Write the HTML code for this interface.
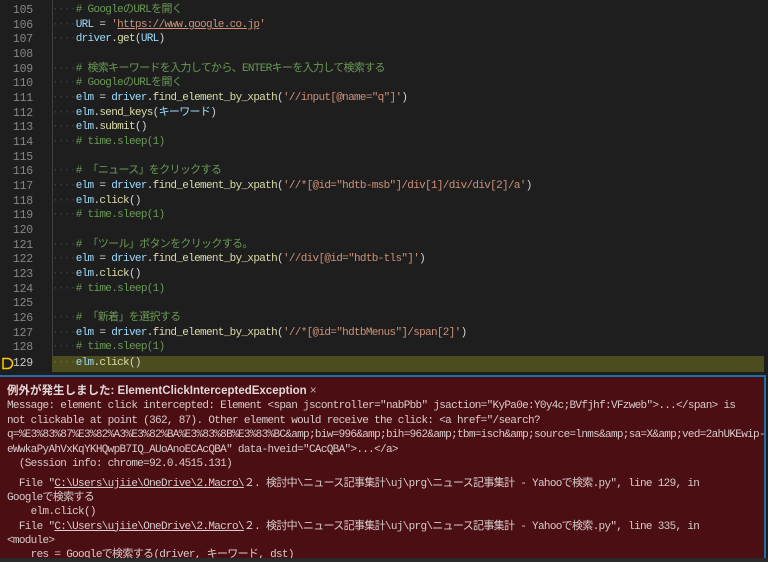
<!DOCTYPE html>
<html><head><meta charset="utf-8"><style>
*{margin:0;padding:0;box-sizing:border-box}
body{width:768px;height:562px;background:#1e1e1e;overflow:hidden;position:relative;font-family:"Liberation Mono","Noto Sans CJK JP",monospace}
.ln{position:absolute;left:0;width:33px;text-align:right;color:#858585;font-size:11.5px;letter-spacing:-0.2px}
.cl{position:absolute;left:52px;font-size:11px;letter-spacing:-0.68px;white-space:pre;color:#d4d4d4}
.d{color:#3e3e3e}
.c{color:#6a9955}.v{color:#9cdcfe}.s{color:#ce9178}.f{color:#dcdcaa}.u{text-decoration:underline}
.guide{position:absolute;left:52px;top:0;width:1px;height:372px;background:#404040}
.hl{position:absolute;left:52px;top:356px;width:712px;height:16px;background:#4b4d1e}
.panel{position:absolute;left:0;top:375px;width:766px;height:183px;background:#4b0e12;border-top:2px solid #1f6fa8;border-right:2px solid #1f6fa8}
.title{position:absolute;left:7px;top:5px;font-family:"Liberation Sans","Noto Sans CJK JP",sans-serif;font-weight:bold;font-size:11.5px;color:#e0d8d8}
.pl{position:absolute;left:7px;font-size:11px;letter-spacing:-0.68px;white-space:pre;color:#d8cccc}
.bottom{position:absolute;left:0;top:558px;width:768px;height:4px;background:#2a2a2a}
</style></head><body>
<div class="guide"></div>
<div class="hl"></div>
<div class="ln" style="top:3px;line-height:15px">105</div>
<div class="cl" style="top:3px;line-height:15px"><span class="d">····</span><span class="c"># GoogleのURLを開く</span></div>
<div class="ln" style="top:18px;line-height:15px">106</div>
<div class="cl" style="top:18px;line-height:15px"><span class="d">····</span><span class="v">URL</span> = <span class="s">'<span class="u">https://www.google.co.jp</span>'</span></div>
<div class="ln" style="top:32px;line-height:15px">107</div>
<div class="cl" style="top:32px;line-height:15px"><span class="d">····</span><span class="v">driver</span>.<span class="f">get</span>(<span class="v">URL</span>)</div>
<div class="ln" style="top:47px;line-height:15px">108</div>
<div class="ln" style="top:62px;line-height:15px">109</div>
<div class="cl" style="top:62px;line-height:15px"><span class="d">····</span><span class="c"># 検索キーワードを入力してから、ENTERキーを入力して検索する</span></div>
<div class="ln" style="top:76px;line-height:15px">110</div>
<div class="cl" style="top:76px;line-height:15px"><span class="d">····</span><span class="c"># GoogleのURLを開く</span></div>
<div class="ln" style="top:91px;line-height:15px">111</div>
<div class="cl" style="top:91px;line-height:15px"><span class="d">····</span><span class="v">elm</span> = <span class="v">driver</span>.<span class="f">find_element_by_xpath</span>(<span class="s">'//input[@name="q"]'</span>)</div>
<div class="ln" style="top:106px;line-height:15px">112</div>
<div class="cl" style="top:106px;line-height:15px"><span class="d">····</span><span class="v">elm</span>.<span class="f">send_keys</span>(<span class="v">キーワード</span>)</div>
<div class="ln" style="top:120px;line-height:15px">113</div>
<div class="cl" style="top:120px;line-height:15px"><span class="d">····</span><span class="v">elm</span>.<span class="f">submit</span>()</div>
<div class="ln" style="top:135px;line-height:15px">114</div>
<div class="cl" style="top:135px;line-height:15px"><span class="d">····</span><span class="c"># time.sleep(1)</span></div>
<div class="ln" style="top:150px;line-height:15px">115</div>
<div class="ln" style="top:164px;line-height:15px">116</div>
<div class="cl" style="top:164px;line-height:15px"><span class="d">····</span><span class="c"># 「ニュース」をクリックする</span></div>
<div class="ln" style="top:179px;line-height:15px">117</div>
<div class="cl" style="top:179px;line-height:15px"><span class="d">····</span><span class="v">elm</span> = <span class="v">driver</span>.<span class="f">find_element_by_xpath</span>(<span class="s">'//*[@id="hdtb-msb"]/div[1]/div/div[2]/a'</span>)</div>
<div class="ln" style="top:194px;line-height:15px">118</div>
<div class="cl" style="top:194px;line-height:15px"><span class="d">····</span><span class="v">elm</span>.<span class="f">click</span>()</div>
<div class="ln" style="top:208px;line-height:15px">119</div>
<div class="cl" style="top:208px;line-height:15px"><span class="d">····</span><span class="c"># time.sleep(1)</span></div>
<div class="ln" style="top:223px;line-height:15px">120</div>
<div class="ln" style="top:238px;line-height:15px">121</div>
<div class="cl" style="top:238px;line-height:15px"><span class="d">····</span><span class="c"># 「ツール」ボタンをクリックする。</span></div>
<div class="ln" style="top:252px;line-height:15px">122</div>
<div class="cl" style="top:252px;line-height:15px"><span class="d">····</span><span class="v">elm</span> = <span class="v">driver</span>.<span class="f">find_element_by_xpath</span>(<span class="s">'//div[@id="hdtb-tls"]'</span>)</div>
<div class="ln" style="top:267px;line-height:15px">123</div>
<div class="cl" style="top:267px;line-height:15px"><span class="d">····</span><span class="v">elm</span>.<span class="f">click</span>()</div>
<div class="ln" style="top:282px;line-height:15px">124</div>
<div class="cl" style="top:282px;line-height:15px"><span class="d">····</span><span class="c"># time.sleep(1)</span></div>
<div class="ln" style="top:296px;line-height:15px">125</div>
<div class="ln" style="top:311px;line-height:15px">126</div>
<div class="cl" style="top:311px;line-height:15px"><span class="d">····</span><span class="c"># 「新着」を選択する</span></div>
<div class="ln" style="top:326px;line-height:15px">127</div>
<div class="cl" style="top:326px;line-height:15px"><span class="d">····</span><span class="v">elm</span> = <span class="v">driver</span>.<span class="f">find_element_by_xpath</span>(<span class="s">'//*[@id="hdtbMenus"]/span[2]'</span>)</div>
<div class="ln" style="top:340px;line-height:15px">128</div>
<div class="cl" style="top:340px;line-height:15px"><span class="d">····</span><span class="c"># time.sleep(1)</span></div>
<div class="ln" style="top:356px;line-height:15px;color:#c6c6c6">129</div>
<div class="cl" style="top:356px;line-height:15px"><span style="color:#6b6b40">····</span><span class="v">elm</span>.<span class="f">click</span>()</div>
<svg style="position:absolute;left:1px;top:357px" width="13" height="13" viewBox="0 0 13 13"><path d="M2 1.5h4.5a5 5 0 0 1 0 10H2z" fill="none" stroke="#ffcc00" stroke-width="1.5"/></svg>
<div class="panel">
<div class="title">例外が発生しました: ElementClickInterceptedException <span style="font-weight:normal;color:#c0b0b0">×</span></div>
<div class="pl" style="top:22px;line-height:14.5px">Message: element click intercepted: Element &lt;span jscontroller="nabPbb" jsaction="KyPa0e:Y0y4c;BVfjhf:VFzweb"&gt;...&lt;/span&gt; is
not clickable at point (362, 87). Other element would receive the click: &lt;a href="/search?
q=%E3%83%87%E3%82%A3%E3%82%BA%E3%83%8B%E3%83%BC&amp;amp;biw=996&amp;amp;bih=962&amp;amp;tbm=isch&amp;amp;source=lnms&amp;amp;sa=X&amp;amp;ved=2ahUKEwip-
eWwkaPyAhVxKqYKHQwpB7IQ_AUoAnoECAcQBA" data-hveid="CAcQBA"&gt;...&lt;/a&gt;
  (Session info: chrome=92.0.4515.131)</div>
<div class="pl" style="top:100px;line-height:14.2px">  File "<span class="u">C:\Users\ujiie\OneDrive\2.Macro\</span>２. 検討中\ニュース記事集計\uj\prg\ニュース記事集計 - Yahooで検索.py", line 129, in
Googleで検索する
    elm.click()
  File "<span class="u">C:\Users\ujiie\OneDrive\2.Macro\</span>２. 検討中\ニュース記事集計\uj\prg\ニュース記事集計 - Yahooで検索.py", line 335, in
&lt;module&gt;
    res = Googleで検索する(driver, キーワード, dst)</div>
</div>
<div class="bottom"></div>
</body></html>
